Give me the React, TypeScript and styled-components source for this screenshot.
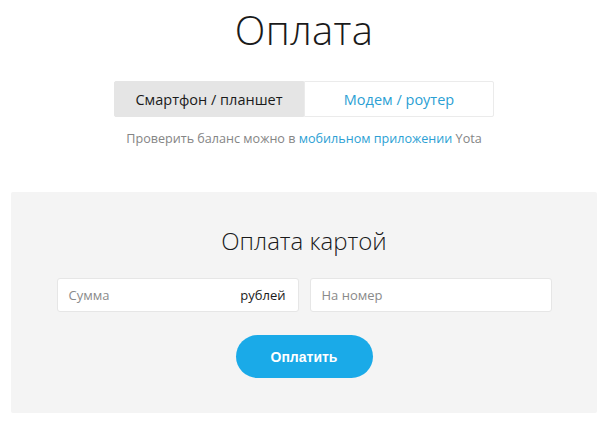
import styled, { createGlobalStyle } from "styled-components";

const Global = createGlobalStyle`
  body {
    margin: 0;
    background: #fff;
    font-family: "Open Sans", "Noto Sans", sans-serif;
    color: #1a1a1a;
  }
`;

const Page = styled.div`
  width: 608px;
  display: flex;
  flex-direction: column;
  align-items: center;
  padding-top: 6px;
`;
const Title = styled.h1`
  margin: 0;
  font-size: 40px;
  font-weight: 300;
  line-height: 48px;
  letter-spacing: 0.3px;
`;
const Tabs = styled.div`
  display: flex;
  margin-top: 27px;
  width: 380px;
  height: 36px;
`;
const Tab = styled.button<{ $active?: boolean }>`
  flex: 1;
  border: 1px solid ${(p) => (p.$active ? "#e5e5e5" : "#ebebeb")};
  background: ${(p) => (p.$active ? "#e5e5e5" : "#fff")};
  color: ${(p) => (p.$active ? "#1a1a1a" : "#2c9fd4")};
  font-family: "Open Sans", sans-serif;
  font-size: 14.5px;
  padding: 0;
  border-radius: ${(p) => (p.$active ? "2px 0 0 2px" : "0 2px 2px 0")};
`;
const Hint = styled.p`
  margin: 13px 0 0;
  font-size: 12.6px;
  color: #858585;
  a {
    color: #2c9fd4;
    text-decoration: none;
  }
`;
const Panel = styled.section`
  margin-top: 45px;
  width: 586px;
  height: 221px;
  background: #f4f4f4;
  border-radius: 2px;
  display: flex;
  flex-direction: column;
  align-items: center;
  box-sizing: border-box;
  padding-top: 34px;
`;
const PanelTitle = styled.h2`
  margin: 0;
  font-size: 24px;
  font-weight: 300;
  line-height: 30px;
`;
const Fields = styled.div`
  display: flex;
  gap: 11px;
  margin-top: 22px;
`;
const Field = styled.label`
  width: 242px;
  height: 34px;
  box-sizing: border-box;
  background: #fff;
  border: 1px solid #e6e6e6;
  border-radius: 3px;
  display: flex;
  align-items: center;
  padding: 0 12px 0 11px;
  font-size: 13px;
`;
const Placeholder = styled.span`
  flex: 1;
  color: #8a8a8a;
`;
const Unit = styled.span`
  color: #1a1a1a;
  font-size: 13px;
`;
const PayButton = styled.button`
  margin-top: 23px;
  width: 137px;
  height: 43px;
  border: none;
  border-radius: 22px;
  background: #1aaae8;
  color: #fff;
  font-family: "Liberation Sans", Arial, sans-serif;
  font-weight: 700;
  font-size: 14px;
`;

export default function App() {
  return (
    <>
      <Global />
      <Page>
        <Title>Оплата</Title>
        <Tabs>
          <Tab $active>Смартфон / планшет</Tab>
          <Tab>Модем / роутер</Tab>
        </Tabs>
        <Hint>
          Проверить баланс можно в <a href="#">мобильном приложении</a> Yota
        </Hint>
        <Panel>
          <PanelTitle>Оплата картой</PanelTitle>
          <Fields>
            <Field>
              <Placeholder>Сумма</Placeholder>
              <Unit>рублей</Unit>
            </Field>
            <Field>
              <Placeholder>На номер</Placeholder>
            </Field>
          </Fields>
          <PayButton>Оплатить</PayButton>
        </Panel>
      </Page>
    </>
  );
}
